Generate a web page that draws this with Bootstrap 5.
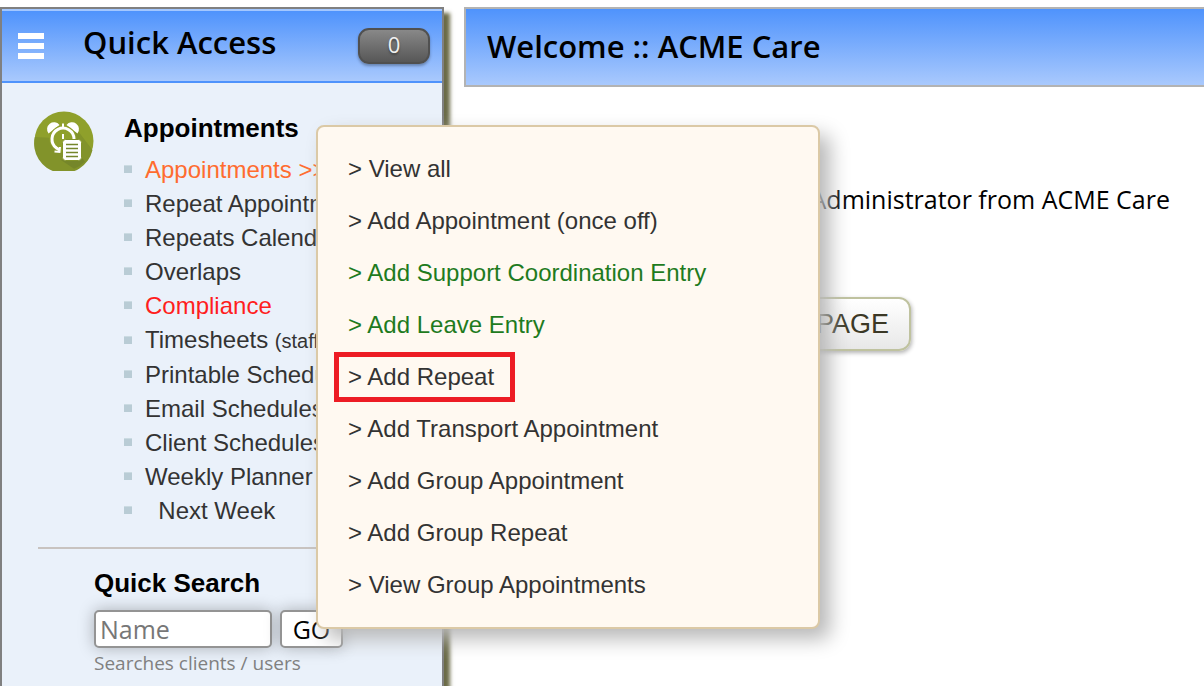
<!DOCTYPE html>
<html lang="en">
<head>
<meta charset="utf-8">
<meta name="viewport" content="width=device-width, initial-scale=1">
<title>Welcome :: ACME Care</title>
<link href="https://cdn.jsdelivr.net/npm/bootstrap@5.3.0/dist/css/bootstrap.min.css" rel="stylesheet">
<style>
  :root { --humanist: "Trebuchet MS", "Open Sans", "Noto Sans", sans-serif; --grotesk: "Liberation Sans", Arial, sans-serif; }
  body { font-family: var(--grotesk); font-size: 24px; line-height: 34px; color: #000; background: #fff; overflow-x: hidden; }
  .shell { padding-top: 7px; min-height: 100vh; }
  .side-panel { width: 444px; background: #eaf1fa; border: 2px solid #808080; border-bottom: 0; box-shadow: 6px 6px 4px #6b6b47; }
  .side-head { height: 74px; padding: 0 12px 0 15px; border-top: 2px solid #a3c7ff; border-bottom: 2px solid #4f93fc; background: linear-gradient(#4f93fc, #a9c9fd); }
  .bar-title { font-family: var(--humanist); font-weight: 600; font-size: 31px; line-height: 40px; margin: 0; padding-bottom: 2px; white-space: nowrap; }
  .side-head .bar-title { padding: 0 0 8px 36px; }
  .menu-toggle { width: 30px; height: 32px; }
  .count-btn { width: 72px; height: 36px; border: 2px solid #505050; border-radius: 11px; background: linear-gradient(#888, #575757); color: #f0f0f0; font-family: var(--humanist); font-size: 22px; line-height: 24px; text-shadow: 0 2px 2px #444; box-shadow: 0 2px 3px rgba(0,0,0,.3); }
  .count-btn.btn { padding: 0 0 4px; }
  .group-title { font-weight: 700; font-size: 26px; line-height: 34px; margin: 0; }
  .side-section { padding: 28px 12px 0 32px; }
  .side-list { margin-left: 30px; }
  .side-links { margin-top: 8px; }
  .side-links a { color: #333; text-decoration: none; white-space: nowrap; }
  .side-links li { display: flex; align-items: center; }
  .side-links li::before { content: ""; width: 8px; height: 8px; margin: 0 13px 2px 0; background: #b9ccd5; border-top: 1px solid #cbdbe2; }
  .side-links a.is-open { color: #ff6c2f; }
  .side-links a.is-alert { color: #ff1e1e; }
  .side-links small { font-size: 20px; }
  .divider { height: 2px; background: #c8c3c0; margin: 19px 32px 0 36px; }
  .search-area { padding: 17px 32px 0 92px; }
  .search-row { margin-top: 9px; }
  .search-area .form-control { width: 178px; height: 38px; padding: 0 4px; }
  .search-area .form-control, .go-btn { border: 2px solid #949494; border-radius: 5px; background: #fff; font-family: var(--humanist); font-size: 25px; line-height: 34px; box-shadow: 0 0 16px rgba(0,0,0,.28); }
  .search-area .form-control::placeholder { color: #777; }
  .go-btn { width: 63px; height: 38px; padding: 0; color: #000; }
  .hint { font-family: var(--humanist); font-size: 19px; line-height: 24px; color: #808080; margin-top: 3px; }
  .fly-menu { left: 314px; top: 116px; width: 504px; padding: 16px; border: 2px solid #dbc9a6; border-radius: 8px; background: #fff9f1; box-shadow: 10px 10px 20px #b8b8b8; z-index: 10; }
  .fly-menu li { height: 52px; display: flex; align-items: center; }
  .fly-menu a { border: 5px solid transparent; padding: 3px 16px 3px 9px; color: #333; text-decoration: none; white-space: nowrap; }
  .fly-menu a.is-new { color: #1e7b1e; }
  .fly-menu a.is-marked { border-color: #ed1c24; }
  .main-head { height: 80px; padding: 0 21px; border: 2px solid #b3b3b3; border-right: 0; background: linear-gradient(#4f93fc, #a9c9fd); }
  .main-panel { margin-left: 20px; }
  .welcome { font-family: var(--humanist); font-size: 25px; padding: 95px 34px 0 0; margin: 0; }
  .page-btn { height: 54px; margin: 81px 293px 0 0; padding: 0 20px; border: 2px solid #bfc29f; border-radius: 12px; background: linear-gradient(#fff, #e8e8e8); color: #3b3826; font-size: 27px; box-shadow: 1px 2px 4px rgba(0,0,0,.3); }
</style>
</head>
<body>
<div class="shell d-flex">
  <aside class="side-panel position-relative flex-shrink-0">
    <header class="side-head d-flex align-items-center">
      <button class="btn p-0 border-0 d-flex menu-toggle" type="button" aria-label="Menu">
        <svg width="30" height="32" viewBox="0 0 30 32" fill="#fff"><path d="M1 3h26v6H1zM1 13h26v6H1zM1 23h26v6H1z"/></svg>
      </button>
      <h2 class="bar-title flex-grow-1">Quick Access</h2>
      <button class="btn count-btn" type="button">0</button>
    </header>
    <section class="side-section d-flex align-items-start">
      <svg class="flex-shrink-0" width="60" height="60" viewBox="0 0 60 60" aria-hidden="true">
        <circle cx="30" cy="30" r="29.500" fill="#8fa02b"/>
        <path d="M.8 26 20 27l24-7 14.500 19A29.500 29.500 0 0 1 .8 26z" fill="#82932a"/>
        <path d="m27 49 20-3 4 4.500a29.500 29.500 0 0 1-11 7.300z" fill="#75862a"/>
        <path d="M14.500 22.500a6.500 6.500 0 0 1 11-8.500zM32.500 14a6.500 6.500 0 0 1 11 8.500z" fill="#fff"/>
        <circle cx="29" cy="28" r="13.500" fill="#8fa02b"/>
        <g fill="none" stroke="#fff">
          <path d="M40 28a11 11 0 1 0-17.500 9l3 2" stroke-width="3"/>
          <path d="m20.500 40.500 5 .5.500-5M29 12.500v5M29 23v5" stroke-width="2"/>
        </g>
        <rect x="28.500" y="28.500" width="19" height="21" rx="3" fill="#fff" stroke="#82932a"/>
        <path d="M32 33.500h12M32 37.500h12M32 41.500h12M32 45.500h12" stroke="#75862a" stroke-width="1.500"/>
      </svg>
      <div class="side-list">
        <h3 class="group-title">Appointments</h3>
        <ul class="side-links list-unstyled mb-0">
          <li><a href="#" class="is-open">Appointments &gt;&gt;</a></li>
          <li><a href="#">Repeat Appointments</a></li>
          <li><a href="#">Repeats Calendar</a></li>
          <li><a href="#">Overlaps</a></li>
          <li><a href="#" class="is-alert">Compliance</a></li>
          <li><a href="#">Timesheets <small>(staff)</small></a></li>
          <li><a href="#">Printable Schedules</a></li>
          <li><a href="#">Email Schedules</a></li>
          <li><a href="#">Client Schedules</a></li>
          <li><a href="#">Weekly Planner</a></li>
          <li><a href="#">&nbsp; Next Week</a></li>
        </ul>
      </div>
    </section>
    <div class="divider"></div>
    <form class="search-area">
      <label class="group-title" for="q">Quick Search</label>
      <div class="d-flex gap-2 search-row">
        <input class="form-control" id="q" type="text" placeholder="Name">
        <button class="btn go-btn" type="button">GO</button>
      </div>
      <div class="hint">Searches clients / users</div>
    </form>
    <ul class="fly-menu position-absolute list-unstyled mb-0">
      <li><a href="#">&gt; View all</a></li>
      <li><a href="#">&gt; Add Appointment (once off)</a></li>
      <li><a href="#" class="is-new">&gt; Add Support Coordination Entry</a></li>
      <li><a href="#" class="is-new">&gt; Add Leave Entry</a></li>
      <li><a href="#" class="is-marked">&gt; Add Repeat</a></li>
      <li><a href="#">&gt; Add Transport Appointment</a></li>
      <li><a href="#">&gt; Add Group Appointment</a></li>
      <li><a href="#">&gt; Add Group Repeat</a></li>
      <li><a href="#">&gt; View Group Appointments</a></li>
    </ul>
  </aside>
  <main class="main-panel flex-grow-1 d-flex flex-column">
    <header class="main-head d-flex align-items-center"><h1 class="bar-title">Welcome :: ACME Care</h1></header>
    <p class="welcome text-end">Administrator from ACME Care</p>
    <button class="btn page-btn align-self-end" type="button">PAGE</button>
  </main>
</div>
<script src="https://cdn.jsdelivr.net/npm/bootstrap@5.3.0/dist/js/bootstrap.bundle.min.js"></script>
</body>
</html>
